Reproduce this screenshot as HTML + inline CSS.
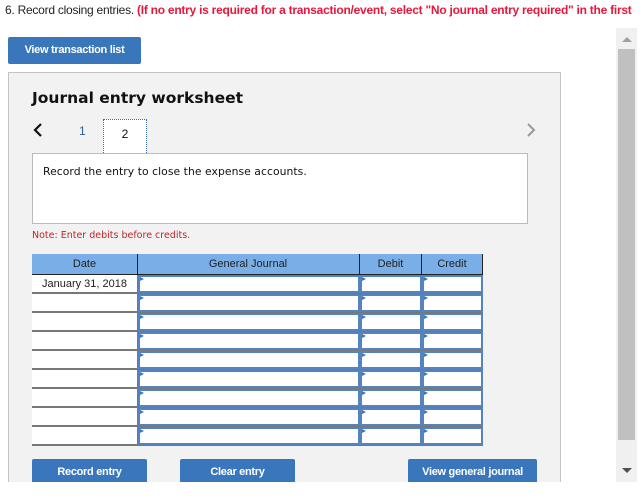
<!DOCTYPE html>
<html><head><meta charset="utf-8"><style>
*{margin:0;padding:0;box-sizing:border-box}
body{width:643px;height:500px;background:#fff;position:relative;overflow:hidden;font-family:"Liberation Sans",Arial,sans-serif}
#w{position:absolute;left:0;top:0;width:643px;height:482px;overflow:hidden}
.a{position:absolute}
.btn{position:absolute;background:#3a76bb;color:#fff;font-weight:bold;font-size:11px;text-align:center;border-radius:2px;letter-spacing:-0.3px}
.v{font-family:"DejaVu Sans",Verdana,sans-serif}
.cell{position:absolute;background:#fff;border:2px solid #5583bf}
.cell:before{content:"";position:absolute;left:0;top:0;border-left:4px solid #3a76bb;border-top:2.5px solid transparent;border-bottom:2.5px solid transparent}
</style></head><body><div id="w">
<div class="a" style="left:5px;top:3px;font-size:12px;color:#222;white-space:nowrap;letter-spacing:-0.25px">6. Record closing entries. <b style="color:#e8173c">(If no entry is required for a transaction/event, select "No journal entry required" in the first</b></div>
<div class="btn" style="left:8px;top:37px;width:133px;height:27px;line-height:27px">View transaction list</div>
<div class="a" style="left:8px;top:72px;width:553px;height:440px;background:#f2f2f2;border:1px solid #c4c4c4"></div>
<div class="a v" style="left:32px;top:89px;font-size:15.5px;font-weight:bold;color:#111">Journal entry worksheet</div>
<svg class="a" style="left:33px;top:123px" width="10" height="14"><path d="M8 1 L2 7 L8 13" fill="none" stroke="#111" stroke-width="2.2"/></svg>
<div class="a" style="left:79px;top:124px;font-size:12px;color:#2a5d9f">1</div>
<div class="a" style="left:103px;top:119px;width:44px;height:36px;background:#fff;border:1px dotted #3a6aa8;border-bottom:none;text-align:center;line-height:28px;font-size:12px;color:#111">2</div>
<svg class="a" style="left:526px;top:123px" width="10" height="14"><path d="M2 1 L8 7 L2 13" fill="none" stroke="#999" stroke-width="2"/></svg>
<div class="a" style="left:32px;top:153px;width:496px;height:71px;background:#fff;border:1px solid #bbb"></div>
<div class="a v" style="left:43px;top:165px;font-size:10.8px;color:#111;letter-spacing:0.05px">Record the entry to close the expense accounts.</div>
<div class="a v" style="left:32px;top:230px;font-size:9.5px;color:#c0242c">Note: Enter debits before credits.</div>
<div class="a" style="left:32px;top:254px;width:451px;height:21px;background:#79aee6;border-bottom:1px solid #222"></div>
<div class="a" style="left:137px;top:254px;width:1px;height:20px;background:#222"></div>
<div class="a" style="left:359px;top:254px;width:1px;height:20px;background:#222"></div>
<div class="a" style="left:421px;top:254px;width:1px;height:20px;background:#222"></div>
<div class="a" style="left:482px;top:254px;width:1px;height:20px;background:#222"></div>
<div class="a" style="left:32px;top:258px;width:105px;text-align:center;font-size:11px;color:#222">Date</div>
<div class="a" style="left:137px;top:258px;width:222px;text-align:center;font-size:11px;color:#222">General Journal</div>
<div class="a" style="left:360px;top:258px;width:61px;text-align:center;font-size:11px;color:#222">Debit</div>
<div class="a" style="left:421px;top:258px;width:62px;text-align:center;font-size:11px;color:#222">Credit</div>
<div class="a" style="left:32px;top:275px;width:451px;height:171px;background:#777"></div>
<div id="rows"></div>
<div class="a" style="left:32px;top:278px;width:105px;text-align:center;font-size:11px;color:#222">January 31, 2018</div>
<div class="btn" style="left:32px;top:459px;width:115px;height:26px;line-height:26px">Record entry</div>
<div class="btn" style="left:180px;top:459px;width:115px;height:26px;line-height:26px">Clear entry</div>
<div class="btn" style="left:408px;top:459px;width:129px;height:26px;line-height:26px">View general journal</div>
<div class="a" style="left:616px;top:28px;width:21px;height:454px;background:#f0f0f0"></div>
<div class="a" style="left:618px;top:49px;width:17px;height:391px;background:#c0c0c0"></div>
<div class="a" style="left:622px;top:37px;border-left:5px solid transparent;border-right:5px solid transparent;border-bottom:5px solid #a0a0a0"></div>
<div class="a" style="left:622px;top:468px;border-left:5px solid transparent;border-right:5px solid transparent;border-top:5px solid #505050"></div>
<script>
var h='';for(var i=0;i<9;i++){var t=275+i*19;
h+='<div class="a" style="left:32px;top:'+t+'px;width:105px;height:17px;background:#fff"></div>';
h+='<div class="cell" style="left:138px;top:'+t+'px;width:222px;height:18px"></div>';
h+='<div class="cell" style="left:360px;top:'+t+'px;width:62px;height:18px"></div>';
h+='<div class="cell" style="left:422px;top:'+t+'px;width:61px;height:18px"></div>';}
document.getElementById('rows').outerHTML=h;
</script>
</div></body></html>
